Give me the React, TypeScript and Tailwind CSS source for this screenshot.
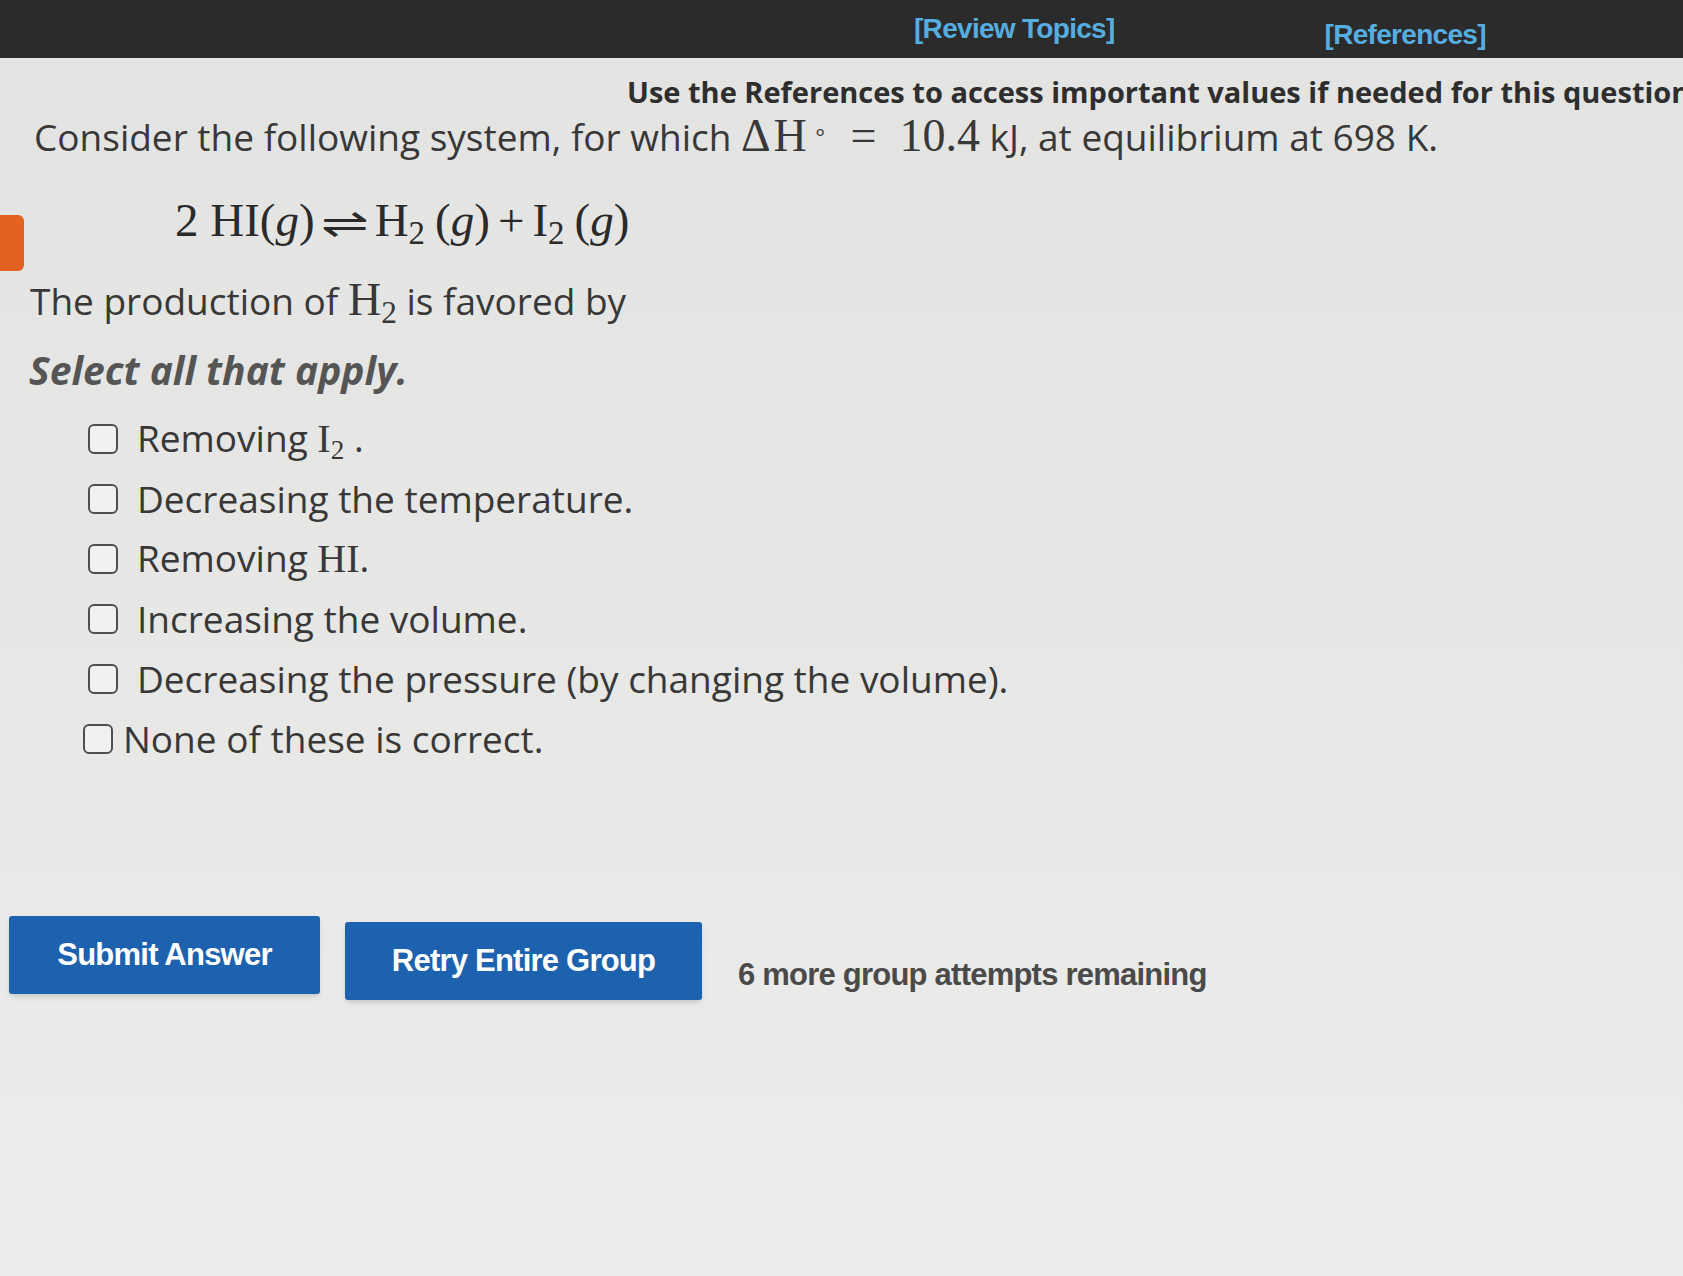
import React from 'react';

const serif = "font-['Liberation_Serif',serif]";

const OPTIONS: React.ReactNode[] = [
    <>Removing <span className={`${serif} text-[40px]`}>I<sub className="text-[0.68em]">2</sub></span> .</>,
    <>Decreasing the temperature.</>,
    <>Removing <span className={`${serif} text-[40px]`}>HI</span>.</>,
    <>Increasing the volume.</>,
    <>Decreasing the pressure (by changing the volume).</>,
    <>None of these is correct.</>,
];

export default function App() {
    return (
        <div className="relative min-h-[1276px] w-full overflow-hidden bg-gradient-to-b from-[#e3e3e1] via-[#e7e7e5] to-[#ededeb] font-['Open_Sans',sans-serif] text-[#383838]">
            {/* Top bar */}
            <div className="flex h-[58px] items-center whitespace-nowrap bg-[#2b2b2b] font-['Liberation_Sans',sans-serif] text-[28px] font-bold tracking-tight text-[#56ade0]">
                <span className="ml-[914px]">[Review Topics]</span>
                <span className="ml-[210px] mt-3">[References]</span>
            </div>

            <div className="whitespace-nowrap pl-[627px] pt-[14px] text-[29px] font-bold leading-[39px] text-[#2e2e2e]">
                Use the References to access important values if needed for this question.
            </div>

            {/* orange tab */}
            <div className="absolute left-0 top-[215px] h-[56px] w-[24px] rounded-r-md bg-[#e2621f]" />

            <div className="pl-[34px] pr-4">
                <p className="whitespace-nowrap text-[37px] leading-[51px]">
                    Consider the following system, for which{' '}
                    <span className={`${serif} text-[46px] leading-[40px]`}>
                        <span className="tracking-[0.06em]">ΔH</span>
                        <sup className="ml-[4px] text-[0.5em]">∘</sup>
                        <span className="mx-[0.5em]">=</span>10.4
                    </span>{' '}
                    kJ, at equilibrium at 698 K.
                </p>

                <p className={`mt-[28px] whitespace-nowrap pl-[141px] ${serif} text-[47px] leading-[60px] text-[#2a2a2a]`}>
                    2 HI(<i>g</i>)
                    <span className="mx-[14px] inline-block scale-x-150 text-[38px]">⇌</span>
                    H<sub className="text-[0.7em]">2</sub>
                    <span className="ml-[10px]">(<i>g</i>)</span>
                    <span className="mx-[8px]">+</span>
                    I<sub className="text-[0.7em]">2</sub>
                    <span className="ml-[10px]">(<i>g</i>)</span>
                </p>

                <p className="-ml-[4px] mt-[22px] whitespace-nowrap text-[37px] leading-[51px]">
                    The production of{' '}
                    <span className={`${serif} text-[46px] leading-[40px]`}>
                        H<sub className="text-[0.68em]">2</sub>
                    </span>{' '}
                    is favored by
                </p>

                <p className="-ml-[5px] mt-[20px] text-[39px] font-bold italic leading-[48px] text-[#555]">
                    Select all that apply.
                </p>

                <div className="mt-[20px] flex flex-col gap-[10px] pl-[54px]">
                    {OPTIONS.map((o, i) => {
                        const last = i === OPTIONS.length - 1;
                        return (
                            <label
                                key={i}
                                className={`flex h-[50px] items-center whitespace-nowrap text-[37px] ${
                                    last ? '-ml-[5px] gap-[10px]' : 'gap-[19px]'
                                }`}
                            >
                                <span className="h-[30px] w-[30px] shrink-0 rounded-[6px] border-2 border-[#4f4f4f] bg-[#f1f1ef]" />
                                <span>{o}</span>
                            </label>
                        );
                    })}
                </div>
            </div>

            <div className="mt-[146px] flex items-center pl-[9px] font-['Liberation_Sans',sans-serif] font-bold">
                <button className="h-[78px] w-[311px] rounded-[3px] bg-[#1d62ae] text-[31px] tracking-tight text-white shadow-md">
                    Submit Answer
                </button>
                <button className="ml-[25px] mt-[12px] h-[78px] w-[357px] rounded-[3px] bg-[#1d62ae] text-[31px] tracking-tight text-white shadow-md">
                    Retry Entire Group
                </button>
                <span className="ml-[36px] mt-[40px] whitespace-nowrap text-[31px] tracking-tight text-[#4a4a4a]">
                    6 more group attempts remaining
                </span>
            </div>
        </div>
    );
}
